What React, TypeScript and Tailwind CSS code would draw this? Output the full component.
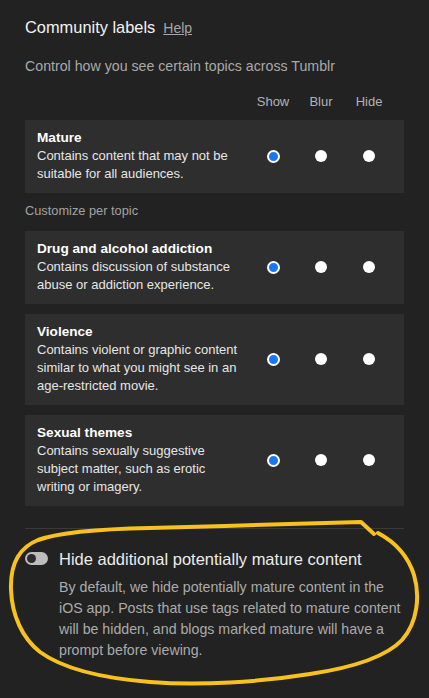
import type { ReactNode } from "react";

const font = { fontFamily: '"Liberation Sans", Arial, sans-serif' };

type Topic = { title: string; desc: ReactNode };

function Radio({ checked }: { checked?: boolean }) {
  return (
    <div className="flex w-[48px] justify-center">
      {checked ? (
        <span className="block h-[13px] w-[13px] rounded-full border-2 border-white bg-[#1877f2]" />
      ) : (
        <span className="block h-[12px] w-[12px] rounded-full bg-white" />
      )}
    </div>
  );
}

function TopicCard({ title, desc }: Topic) {
  return (
    <div className="flex items-center bg-[#2e2e2e] pb-[10px] pl-3 pr-[11px] pt-[9px]">
      <div className="w-[207px]">
        <div className="text-[13.6px] font-bold leading-[18px] text-white">{title}</div>
        <div className="text-[13px] leading-[18px] text-[#e6e6e6]">{desc}</div>
      </div>
      <div className="ml-auto flex">
        <Radio checked />
        <Radio />
        <Radio />
      </div>
    </div>
  );
}

const topics: Topic[] = [
  {
    title: "Drug and alcohol addiction",
    desc: "Contains discussion of substance abuse or addiction experience.",
  },
  {
    title: "Violence",
    desc: "Contains violent or graphic content similar to what you might see in an age-restricted movie.",
  },
  {
    title: "Sexual themes",
    desc: "Contains sexually suggestive subject matter, such as erotic writing or imagery.",
  },
];

export default function App() {
  return (
    <div className="relative min-h-[698px] w-[429px] bg-[#222222]" style={font}>
      <div className="px-[25px] pt-[17px]">
        <div className="flex items-baseline gap-[8px]">
          <h1 className="text-[16.4px] font-medium leading-[20px] text-[#f2f2f2]">Community labels</h1>
          <a className="text-[14px] leading-[20px] text-[#a6a6a6] underline">Help</a>
        </div>
        <p className="mt-[18px] text-[14.2px] leading-[20px] text-[#a9a9a9]">
          Control how you see certain topics across Tumblr
        </p>

        <div className="mt-[17px] flex justify-end pr-[11px] text-[13px] leading-[18px] text-[#b3b3b3]">
          <span className="w-[48px] text-center">Show</span>
          <span className="w-[48px] text-center">Blur</span>
          <span className="w-[48px] text-center">Hide</span>
        </div>

        <div className="mt-[9px]">
          <TopicCard title="Mature" desc="Contains content that may not be suitable for all audiences." />
        </div>

        <p className="mt-[10px] text-[12.8px] leading-[16px] text-[#a3a3a3]">Customize per topic</p>

        <div className="mt-[12px] flex flex-col gap-[10px]">
          {topics.map((t) => (
            <TopicCard key={t.title} {...t} />
          ))}
        </div>

        <div className="mt-[22px] h-px bg-[#3a3a3a]" />

        <div className="mt-[20px] flex gap-[11px]">
          <div className="pt-[3px]">
            <div className="flex h-[13px] w-[23px] items-center rounded-full bg-[#bdbdbd] px-[2px]">
              <span className="block h-[9px] w-[9px] rounded-full bg-[#2b2b2b]" />
            </div>
          </div>
          <div className="flex-1">
            <div className="text-[16.5px] leading-[20px] text-[#ececec]">
              Hide additional potentially mature content
            </div>
            <p className="mt-[8px] text-[14.2px] leading-[21px] text-[#ababab]">
              By default, we hide potentially mature content in the iOS app. Posts that use tags related to
              mature content will be hidden, and blogs marked mature will have a prompt before viewing.
            </p>
          </div>
        </div>
      </div>

      {/* hand-drawn highlight from the screenshot */}
      <svg
        className="pointer-events-none absolute left-0 top-0"
        width="429"
        height="698"
        viewBox="0 0 429 698"
        fill="none"
      >
        <path
          d="M374 534 L361 522 C300 524 220 526 150 528 C100 529 60 532 38 540 C18 548 10 565 11 590 C12 615 22 638 40 652 C62 668 100 678 150 682 C200 686 260 682 310 674 C350 668 385 658 402 640 C418 622 420 595 414 575 C408 556 395 542 378 533"
          stroke="#f7c21d"
          strokeWidth="4"
          strokeLinecap="round"
          strokeLinejoin="round"
        />
      </svg>
    </div>
  );
}
